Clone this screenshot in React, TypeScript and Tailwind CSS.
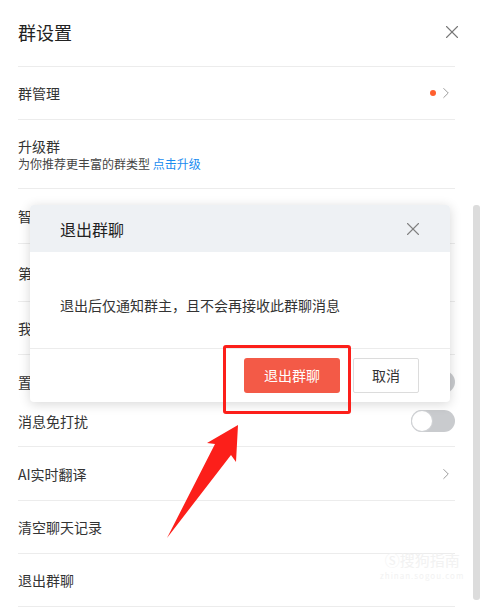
import { X, ChevronRight } from 'lucide-react'

const font = { fontFamily: '"Noto Sans CJK SC", "Noto Sans", sans-serif' }

/* ─── Small pieces ─────────────────────────────────────────── */
function Chevron() {
  return <ChevronRight className="h-[18px] w-[18px] text-[#999]" strokeWidth={1.3} />
}

function Toggle() {
  return (
    <div className="flex h-[22px] w-[44px] items-center rounded-full bg-[#c9cbce] p-[1px]">
      <div className="h-[20px] w-[20px] rounded-full bg-white shadow-[0_0_0_1px_#d0d2d5]" />
    </div>
  )
}

function Row({ label, h, right }: { label: string; h: string; right?: React.ReactNode }) {
  return (
    <div className={`flex items-center justify-between border-b border-[#ececec] ${h}`}>
      <span className="text-[14px] leading-[20px] text-[#333]">{label}</span>
      {right}
    </div>
  )
}

/* ─── Quit dialog ──────────────────────────────────────────── */
function QuitDialog() {
  return (
    <div className="absolute left-[30px] top-[205px] w-[420px] overflow-hidden rounded-[4px] bg-white shadow-[0_2px_12px_rgba(0,0,0,0.16)]">
      <div className="flex h-[47px] items-center justify-between bg-[#eef1f4] pl-[30px] pr-[26px]">
        <span className="text-[16px] leading-[22px] text-[#222]">退出群聊</span>
        <X className="h-[22px] w-[22px] text-[#808080]" strokeWidth={1.2} />
      </div>
      <div className="flex h-[97px] items-start border-b border-[#ececec] pl-[30px] pt-[43px]">
        <span className="text-[14px] leading-[20px] text-[#333]">退出后仅通知群主，且不会再接收此群聊消息</span>
      </div>
      <div className="flex h-[53px] items-start justify-end gap-[13px] pr-[31px] pt-[9px]">
        <button className="h-[35px] w-[96px] rounded-[3px] bg-[#f35a47] text-[14px] text-white">退出群聊</button>
        <button className="h-[35px] w-[66px] rounded-[2px] border border-[#dcdcdc] bg-white text-[14px] text-[#333]">取消</button>
      </div>
    </div>
  )
}

export default function App() {
  return (
    <div className="relative h-[608px] w-[480px] overflow-hidden bg-white" style={font}>
      <div className="ml-[18px] w-[437px]">
        {/* Header */}
        <div className="flex h-[67px] items-start justify-between border-b border-[#ececec] pt-[20px]">
          <span className="text-[18px] leading-[24px] text-[#222]">群设置</span>
          <X className="mr-[-8px] mt-[1px] h-[22px] w-[22px] text-[#777]" strokeWidth={1.2} />
        </div>

        <Row
          label="群管理"
          h="h-[53px]"
          right={
            <div className="flex items-center gap-[1px]">
              <div className="h-[6px] w-[6px] rounded-full bg-[#ff5f2e]" />
              <Chevron />
            </div>
          }
        />

        <div className="flex h-[69px] flex-col justify-center border-b border-[#ececec]">
          <span className="text-[14px] leading-[20px] text-[#333]">升级群</span>
          <span className="text-[12px] leading-[16px] text-[#444]">
            为你推荐更丰富的群类型 <span className="text-[#1a8cf0]">点击升级</span>
          </span>
        </div>

        <Row label="智能群助手" h="h-[55px]" right={<Chevron />} />
        <Row label="第三方应用" h="h-[58px]" right={<Chevron />} />
        <Row label="我在本群的昵称" h="h-[53px]" right={<Chevron />} />

        <div className="flex h-[92px] flex-col border-b border-[#ececec] pt-[7px]">
          <div className="flex h-[39px] items-center justify-between">
            <span className="text-[14px] leading-[20px] text-[#333]">置顶聊天</span>
            <Toggle />
          </div>
          <div className="flex h-[39px] items-center justify-between">
            <span className="text-[14px] leading-[20px] text-[#333]">消息免打扰</span>
            <Toggle />
          </div>
        </div>

        <Row label="AI实时翻译" h="h-[54px]" right={<Chevron />} />
        <Row label="清空聊天记录" h="h-[53px]" />
        <Row label="退出群聊" h="h-[53px]" />
      </div>

      {/* Watermark */}
      <div className="absolute left-[380px] top-[550px] flex flex-col items-center text-[#f2f2f2]">
        <span className="text-[15px] leading-[20px]">Ⓢ搜狗指南</span>
        <span className="text-[8px] leading-[12px] tracking-[1px]">zhinan.sogou.com</span>
      </div>

      {/* Scrollbar */}
      <div className="absolute left-[473px] top-[205px] h-[395px] w-[7px] rounded-[3px] bg-[#dcdcdc]" />

      <QuitDialog />

      {/* Annotation */}
      <div className="absolute left-[223px] top-[345px] h-[69px] w-[128px] rounded-[3px] border-[3px] border-[#fc1f1a]" />
      <svg className="absolute left-0 top-0" width="480" height="608" viewBox="0 0 480 608">
        <polygon points="238,425 207,443 215,444 167,538 231,455 236,462" fill="#fc1f1a" />
      </svg>
    </div>
  )
}
